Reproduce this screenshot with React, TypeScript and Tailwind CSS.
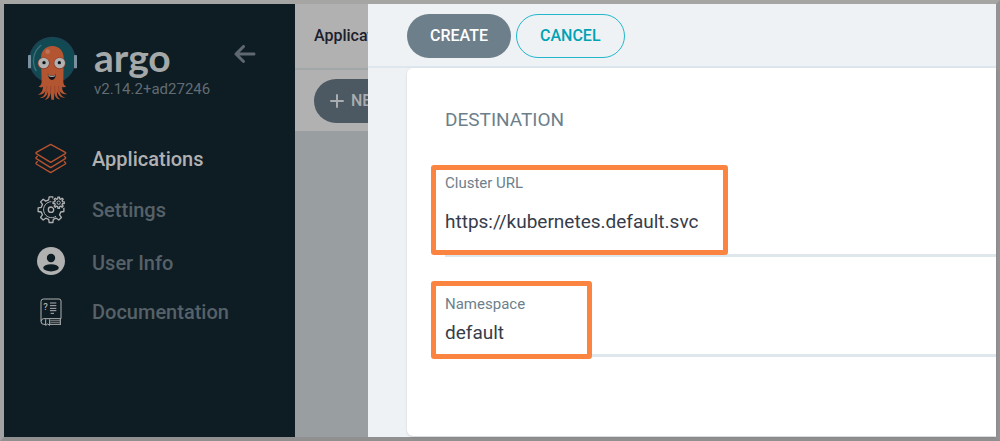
import React, { useState } from "react";
import { FaArrowLeft } from "react-icons/fa6";

function ArgoLogo() {
  return (
    <svg viewBox="21 18 153 195" className="w-[51px] h-[65px] shrink-0" aria-hidden="true">
      <circle cx="97" cy="90" r="70" fill="#1c4354" />
      <circle cx="97" cy="90" r="65" fill="#124a54" />
      <path d="M63 46 C38 66 35 98 48 122" fill="none" stroke="#3f7078" strokeWidth="4" strokeLinecap="round" />
      <rect x="24" y="75" width="9" height="40" rx="2" fill="#7a919d" />
      <rect x="162" y="75" width="9" height="40" rx="2" fill="#7a919d" />
      <path
        d="M97 48 C76 48 63 64 63 84 L65 155 C65 163 60 168 55 169 C60 173 65 173 69 170 C68 184 63 190 53 194 C65 195 73 190 76 183 C75 196 69 201 59 204 C72 206 81 199 84 184 C84 199 81 206 73 209 C85 209 91 201 92 186 L94 209 L102 209 L103 186 C105 201 111 209 121 208 C113 204 110 197 111 184 C115 198 124 205 136 203 C126 200 120 193 119 183 C124 191 132 194 141 192 C131 188 126 182 126 170 C130 173 135 172 139 168 C134 168 130 163 130 155 L131 84 C131 64 118 48 97 48 Z"
        fill="#b35531"
      />
      <path d="M81 168 C80 179 79 182 76 187 M92 168 L91 188 M104 168 L105 188 M115 168 L118 187" fill="none" stroke="#8f3f28" strokeWidth="2" />
      <circle cx="83" cy="65" r="7" fill="#bd7158" />
      <circle cx="71" cy="100" r="18" fill="#8c3b28" />
      <circle cx="119" cy="100" r="18" fill="#8c3b28" />
      <circle cx="71" cy="99" r="16" fill="#b1b1b1" />
      <circle cx="119" cy="99" r="16" fill="#b1b1b1" />
      <circle cx="72" cy="98" r="5" fill="#091016" />
      <circle cx="118" cy="98" r="5" fill="#091016" />
      <path d="M83 133 C89 138 102 138 108 133 C107 145 101 150 96 150 C90 150 85 144 83 133 Z" fill="#151317" />
      <path d="M84 134 C90 138 102 138 107 134 L105 139 C99 142 92 142 86 139 Z" fill="#b1b1b1" />
    </svg>
  );
}

function LayersIcon() {
  return (
    <svg viewBox="45 29 96 93" className="w-8 h-[31px] shrink-0" fill="none" stroke="#b9532f" strokeWidth="4" strokeLinejoin="round" aria-hidden="true">
      <path d="M92 33 L136 57 Q138 59 136 61 L92 87 L49 61 Q47 59 49 57 Z" />
      <path d="M53 68 L49 72 Q47 74 49 76 L92 103 L136 76 Q138 74 136 72 L132 68" />
      <path d="M53 84 L49 88 Q47 90 49 92 L92 118 L136 92 Q138 90 136 88 L132 84" />
    </svg>
  );
}

function gearPath(cx: number, cy: number, inner: number, outer: number, teeth: number) {
  const step = (Math.PI * 2) / teeth;
  const points: string[] = [];
  for (let i = 0; i < teeth; i++) {
    const a = i * step - Math.PI / 2;
    [
      [inner, -0.3],
      [outer, -0.18],
      [outer, 0.18],
      [inner, 0.3]
    ].forEach(([r, k]) => {
      points.push(`${(cx + r * Math.cos(a + k * step)).toFixed(1)} ${(cy + r * Math.sin(a + k * step)).toFixed(1)}`);
    });
  }
  return `M${points.join(" L")} Z`;
}

function GearsIcon() {
  return (
    <svg viewBox="50 184 84 87" className="w-7 h-[29px]" fill="none" stroke="#b1b1b1" strokeWidth="4" strokeLinejoin="round" aria-hidden="true">
      <path d={gearPath(92, 228, 30, 39, 8)} />
      <path d="M107 248 A24 24 0 1 1 94 204" strokeWidth="3" />
      <circle cx="92" cy="228" r="8" />
      <circle cx="115" cy="207" r="22" fill="#0e1c24" stroke="none" />
      <path d={gearPath(115, 207, 12, 17, 8)} />
      <circle cx="115" cy="207" r="5" strokeWidth="3" />
    </svg>
  );
}

function UserIcon() {
  return (
    <svg viewBox="0 0 28 28" className="w-7 h-7" aria-hidden="true">
      <circle cx="14" cy="14" r="14" fill="#b1b1b1" />
      <circle cx="14" cy="11" r="4.2" fill="#0e1c24" />
      <ellipse cx="14" cy="20.8" rx="7.8" ry="3.6" fill="#0e1c24" />
    </svg>
  );
}

function BookIcon() {
  return (
    <svg viewBox="61 190 66 84" className="w-[22px] h-7" fill="none" stroke="#b1b1b1" strokeWidth="3" aria-hidden="true">
      <path d="M77 269 H72 Q64 269 64 260 V200 Q64 193 72 193 H118 Q124 193 124 199 V252 H72 Q65 252 65 260" />
      <path d="M90 269 H124 M122 252 V269" />
      <path d="M92 258 H121 M92 263 H121" strokeWidth="2" />
      <path d="M78 254 V272 L84 268 L90 272 V254" />
      <path d="M91 205 H110 M91 213 H110 M91 221 H110 M91 228 H110 M93 236 H103" />
      <text x="71" y="227" fontSize="28" fontWeight="500" fontFamily="Roboto, sans-serif" fill="#b1b1b1" stroke="none">
        ?
      </text>
    </svg>
  );
}

const navItems = [
  { label: "Applications", icon: <LayersIcon />, row: "items-center text-[#b1b1b1]" },
  { label: "Settings", icon: <GearsIcon />, row: "items-center text-[#566168]" },
  { label: "User Info", icon: <UserIcon />, row: "items-end text-[#566168]" },
  { label: "Documentation", icon: <BookIcon />, row: "items-center text-[#566168]" }
];

function Sidebar() {
  return (
    <aside className="w-[291px] shrink-0 bg-[#0e1c24]">
      <div className="flex pt-8 pl-[23px] pr-[38px]">
        <ArgoLogo />
        <div className="ml-4 flex-1">
          <div className="font-[Lato,sans-serif] font-bold text-[39px] leading-[43px] text-[#a5a8a9]">argo</div>
          <div className="text-[15px] leading-5 text-[#626c72]">v2.14.2+ad27246</div>
        </div>
        <button aria-label="Collapse sidebar" className="self-start mt-1.5 text-[#5e686e]">
          <FaArrowLeft className="w-6 h-6" />
        </button>
      </div>
      <nav className="mt-8">
        {navItems.map((item) => (
          <a key={item.label} href="#" className="flex h-[51px] items-center pl-8">
            <span className={`flex text-xl leading-6 font-medium ${item.row}`}>
              <span className="w-[30px] mr-[26px] flex justify-center">{item.icon}</span>
              {item.label}
            </span>
          </a>
        ))}
      </nav>
    </aside>
  );
}

// the page behind the sliding panel, only its left edge stays visible
function Backdrop() {
  return (
    <div className="w-[73px] shrink-0 overflow-hidden whitespace-nowrap bg-[#999fa1]">
      <div className="h-16 flex items-center pl-[19px] bg-[#b1b1b1] text-base font-medium text-[#1c202d]">Applications</div>
      <div className="h-[63px] flex items-center pl-[19px] bg-[#b1b1b1] border-t-2 border-[#a2a8aa]">
        <button className="flex shrink-0 items-center h-11 rounded-full bg-[#4c5962] px-4 text-base font-medium text-[#a9adaf]">
          <svg viewBox="0 0 14 14" className="w-[14px] h-[14px] mr-[7px]" stroke="currentColor" strokeWidth="2" strokeLinecap="round" aria-hidden="true">
            <path d="M7 1 V13 M1 7 H13" />
          </svg>
          NEW APP
        </button>
      </div>
    </div>
  );
}

export default function App() {
  const [cluster, setCluster] = useState("https://kubernetes.default.svc");
  const [namespace, setNamespace] = useState("default");

  return (
    <div className="min-h-screen flex border-4 border-t-[#a5a6a4] border-l-[#a3a3a3] border-r-[#939393] border-b-[#909090] font-[Roboto,sans-serif]">
      <Sidebar />
      <Backdrop />
      <main className="flex-1 min-w-0 flex flex-col bg-[#eef2f5]">
        <div className="h-16 flex items-center gap-[5px] pt-0.5 pl-[39px] border-b-2 border-[#dde7ed]">
          <button className="h-11 px-[23px] rounded-full bg-[#6d7f8b] text-base font-medium text-white">CREATE</button>
          <button className="h-11 px-[23px] rounded-full border border-[#22b8cc] text-base font-medium text-[#00a2b3]">
            CANCEL
          </button>
        </div>

        <form className="flex-1 ml-[39px] mb-px pl-[38px] pt-10 rounded-l-md bg-white shadow-sm">
          <h2 className="text-[19px] leading-6 text-[#6d7f8b]">DESTINATION</h2>

          <div className="relative mt-[41px] border-b-[3px] border-[#dee8ec]">
            <label htmlFor="cluster" className="block text-[15px] leading-5 text-[#6d7f8b]">
              Cluster URL
            </label>
            <input
              id="cluster"
              value={cluster}
              onChange={(e) => setCluster(e.target.value)}
              className="block w-full h-7 mt-[15px] mb-[18px] text-[19px] text-[#363c4a] outline-none"
            />
            <div className="absolute -top-2 -left-[14px] w-[297px] h-[90px] rounded-[3px] border-[5px] border-[#fa8440] pointer-events-none" />
          </div>

          <div className="relative mt-[37px] border-b-[3px] border-[#dee8ec]">
            <label htmlFor="namespace" className="block text-[15px] leading-5 text-[#6d7f8b]">
              Namespace
            </label>
            <input
              id="namespace"
              value={namespace}
              onChange={(e) => setNamespace(e.target.value)}
              className="block w-full h-7 mt-[5px] mb-[7px] text-[19px] text-[#363c4a] outline-none"
            />
            <div className="absolute -top-[13px] -left-[14px] w-[161px] h-[78px] rounded-[3px] border-[5px] border-[#fa8440] pointer-events-none" />
          </div>
        </form>
      </main>
    </div>
  );
}
